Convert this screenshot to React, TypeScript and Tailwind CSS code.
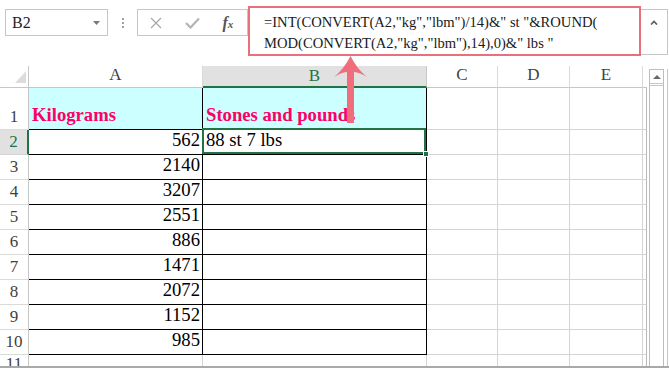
import React from "react";

const values = [562, 2140, 3207, 2551, 886, 1471, 2072, 1152, 985];

function HeaderRow() {
  return (
    <>
      <div className="flex items-end justify-end border-r border-b border-[#c6c6c6] pr-[2px] pb-[4px]">
        <svg width="11" height="12" viewBox="0 0 11 12">
          <polygon points="11,0 11,12 0,12" fill="#dcdcdc" />
        </svg>
      </div>
      <div className="flex items-end justify-center border-r border-b border-r-[#dadada] border-b-[#c6c6c6] text-[17px] leading-normal text-[#3f3f3f]">
        A
      </div>
      <div className="flex items-end justify-center border-r-[1px] border-b-2 border-r-[#c8c8c8] border-b-[#217346] bg-[#e1e1e1] text-[17px] leading-[20px] text-[#217346]">
        B
      </div>
      <div className="flex items-end justify-center border-r border-b border-r-[#dadada] border-b-[#c6c6c6] text-[17px] leading-normal text-[#3f3f3f]">
        C
      </div>
      <div className="flex items-end justify-center border-r border-b border-r-[#dadada] border-b-[#c6c6c6] text-[17px] leading-normal text-[#3f3f3f]">
        D
      </div>
      <div className="flex items-end justify-center border-r border-b border-r-[#dadada] border-b-[#c6c6c6] text-[17px] leading-normal text-[#3f3f3f]">
        E
      </div>
      <div className="border-b border-[#c6c6c6]" />
    </>
  );
}

function DataRow({ n }: { n: number }) {
  const selected = n === 2;
  const isHead = n === 1;
  return (
    <>
      <div
        className={
          selected
            ? "flex items-end justify-center border-r-2 border-b border-r-[#217346] border-b-[#d4d4d4] bg-[#e1e1e1] text-[17px] leading-normal text-[#217346]"
            : "flex items-end justify-center border-r border-b border-r-[#c6c6c6] border-b-[#dadada] text-[17px] leading-normal text-[#3f3f3f]"
        }
      >
        {n}
      </div>
      {isHead ? (
        <div className="flex items-end border-r border-b border-black bg-[#ccffff] px-[3px] text-[18.67px] font-bold leading-normal text-[#ff0066]">
          Kilograms
        </div>
      ) : (
        <div className="flex items-end justify-end border-r border-b border-black px-[2px] text-[18.67px] leading-normal text-black">
          {values[n - 2]}
        </div>
      )}
      {isHead ? (
        <div className="flex items-end border-r border-b border-black bg-[#ccffff] px-[3px] text-[18.67px] font-bold leading-normal whitespace-nowrap text-[#ff0066]">
          Stones and pounds
        </div>
      ) : selected ? (
        <div className="relative flex items-end border-r border-b border-black px-[3px] text-[18.67px] leading-normal text-black">
          88 st 7 lbs
          <div className="absolute -top-[2px] -left-[1px] right-0 bottom-0 z-10 border-2 border-[#217346]" />
          <div className="absolute -right-[3px] -bottom-[3px] z-20 h-[6px] w-[6px] border border-white bg-[#217346]" />
        </div>
      ) : (
        <div className="border-r border-b border-black" />
      )}
      <div className="border-r border-b border-[#d4d4d4]" />
      <div className="border-r border-b border-[#d4d4d4]" />
      <div className="border-r border-b border-[#d4d4d4]" />
      <div className="border-r border-b border-r-[#b8b8b8] border-b-[#d4d4d4]" />
    </>
  );
}

function LastRow() {
  return (
    <>
      <div className="overflow-hidden border-r border-[#c6c6c6]">
        <div className="flex h-[21px] items-end justify-center text-[17px] leading-normal text-[#3f3f3f]">11</div>
      </div>
      <div className="border-r border-[#d4d4d4]" />
      <div className="border-r border-[#d4d4d4]" />
      <div className="border-r border-[#d4d4d4]" />
      <div className="border-r border-[#d4d4d4]" />
      <div className="border-r border-[#d4d4d4]" />
      <div className="border-r border-[#b8b8b8]" />
    </>
  );
}

export default function App() {
  const line1 = '=INT(CONVERT(A2,"kg","lbm")/14)&" st "&ROUND(';
  const line2 = 'MOD(CONVERT(A2,"kg","lbm"),14),0)&" lbs "';
  return (
    <div className="relative h-[368px] w-[669px] overflow-hidden bg-white font-['Liberation_Serif','Times_New_Roman',serif]">
      {/* formula toolbar */}
      <div className="flex h-[66px] items-start">
        <div className="ml-[5px] mt-[9px] flex h-[27px] w-[103px] items-center justify-between border border-[#c6c6c6] pl-[6px] pr-[7px]">
          <span className="text-[16px] leading-none text-[#222]">B2</span>
          <svg width="7" height="4" viewBox="0 0 7 4">
            <polygon points="0,0 7,0 3.5,4" fill="#7a7a7a" />
          </svg>
        </div>
        <div className="mt-[9px] flex h-[27px] w-[29px] flex-col items-center justify-center gap-[2px]">
          <div className="h-[2px] w-[2px] bg-[#a0a0a0]" />
          <div className="h-[2px] w-[2px] bg-[#a0a0a0]" />
          <div className="h-[2px] w-[2px] bg-[#a0a0a0]" />
        </div>
        <div className="mt-[9px] grid h-[27px] w-[111px] grid-cols-3 border border-[#c6c6c6]">
          <div className="flex items-center justify-center">
            <svg width="12" height="12" viewBox="0 0 12 12">
              <path d="M1 1 L11 11 M11 1 L1 11" stroke="#a8a8a8" strokeWidth="1.3" fill="none" />
            </svg>
          </div>
          <div className="flex items-center justify-center">
            <svg width="15" height="12" viewBox="0 0 15 12">
              <path d="M1 6 L5.5 10.5 L14 1.5" stroke="#b4b4b4" strokeWidth="2.2" fill="none" />
            </svg>
          </div>
          <div className="flex items-center justify-center pr-[2px] text-[#555]">
            <span className="text-[16px] font-bold italic leading-none">f</span>
            <span className="mt-[4px] text-[11px] font-bold italic leading-none">x</span>
          </div>
        </div>
        <div className="mt-[6px] h-[50px] w-[393px] border-2 border-[#e8707c] pt-[4px] pl-[14px] text-[14.6px] leading-[21px] whitespace-nowrap text-[#1a1a1a]">
          <div>{line1}</div>
          <div>{line2}</div>
        </div>
        <div className="mt-[9px] flex h-[46px] w-[27px] justify-center border-y border-r border-[#c6c6c6] pt-[10px]">
          <svg width="8" height="5" viewBox="0 0 8 5">
            <path d="M1 4.5 L4 1.5 L7 4.5" stroke="#5a5a5a" strokeWidth="1.6" fill="none" />
          </svg>
        </div>
      </div>

      {/* sheet */}
      <div className="flex">
        <div className="grid w-[647px] grid-cols-[29px_174px_224px_71px_72px_73px_4px] grid-rows-[22px_42px_repeat(9,25px)_11px]">
          <HeaderRow />
          {[1, 2, 3, 4, 5, 6, 7, 8, 9, 10].map((n) => (
            <DataRow key={n} n={n} />
          ))}
          <LastRow />
        </div>
        <div className="flex w-[22px]">
          <div className="ml-[2px] mt-[3px] flex w-[15px] flex-col border-x border-t border-[#bdbdbd]">
            <div className="flex h-[14px] items-center justify-center border-b border-[#c6c6c6]">
              <svg width="8" height="4" viewBox="0 0 8 4">
                <polygon points="0,4 8,4 4,0" fill="#6a6a6a" />
              </svg>
            </div>
            <div className="mt-[1px] border-t border-[#c6c6c6]" />
          </div>
          <div className="ml-[3px] mt-[3px] w-[1px] bg-[#c6c6c6]" />
        </div>
      </div>
      <div className="h-[2px] bg-[#a9a9a9]" />

      {/* annotation arrow */}
      <svg className="absolute left-[332px] top-[55px] z-30" width="38" height="70" viewBox="0 0 38 70">
        <path
          d="M18.5 1 Q12 14 2 22 Q9 17.5 15 17 L15 68 L22 68 L22 17 Q28 17.5 35 22 Q25 14 18.5 1 Z"
          fill="#ef6e7c"
        />
      </svg>
    </div>
  );
}
